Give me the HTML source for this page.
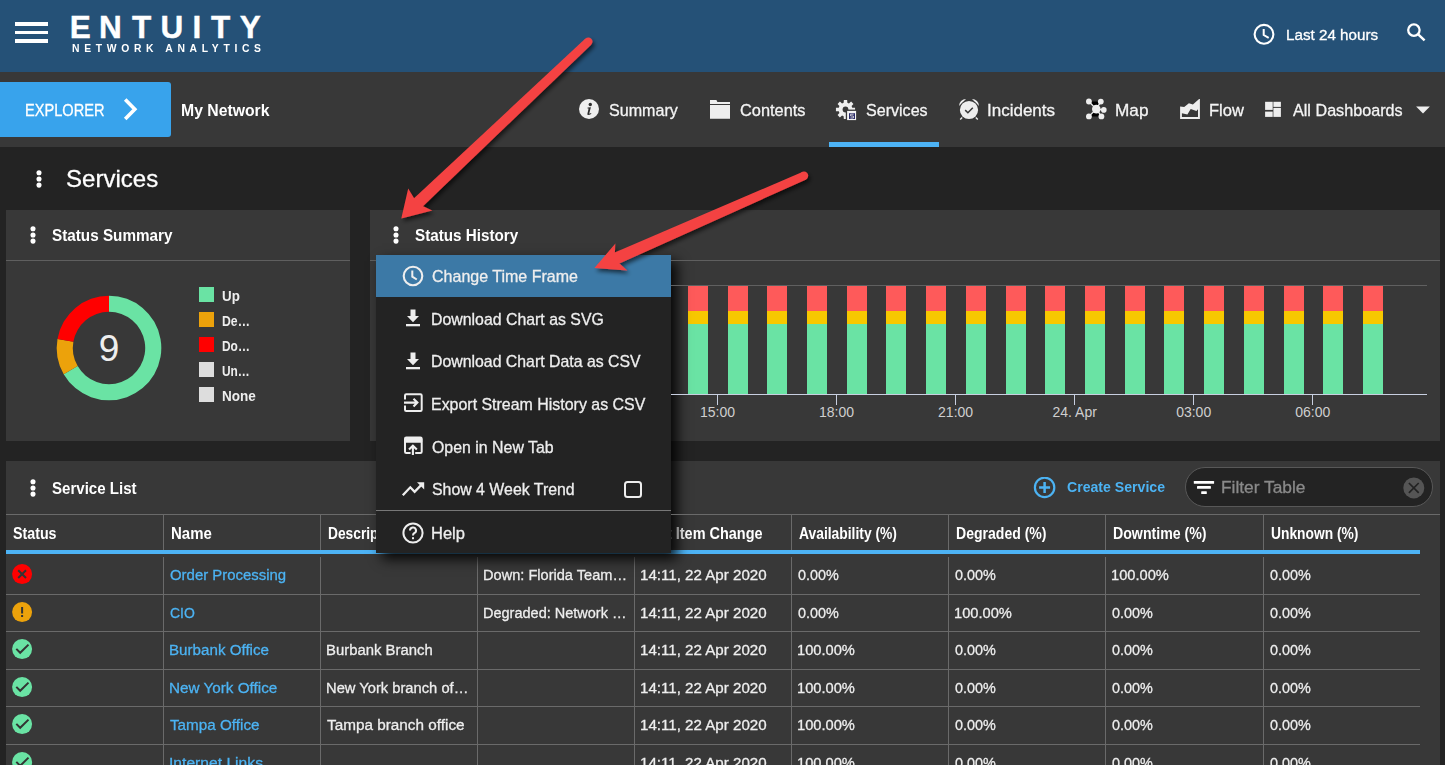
<!DOCTYPE html>
<html><head><meta charset="utf-8"><title>Entuity Services</title>
<style>html,body{margin:0;padding:0;}body{width:1445px;height:765px;overflow:hidden;position:relative;background:#232323;font-family:'Liberation Sans', sans-serif;}</style>
</head><body>
<div style="position:absolute;left:0px;top:0px;width:1445px;height:72px;background:#255177;"></div>
<div style="position:absolute;left:15px;top:22px;width:33px;height:3.8px;background:#fff;"></div>
<div style="position:absolute;left:15px;top:30.9px;width:33px;height:3.3px;background:#fff;"></div>
<div style="position:absolute;left:15px;top:39.3px;width:33px;height:3.8px;background:#fff;"></div>
<div style="position:absolute;left:60.25px;top:12px;width:40px;text-align:center;font:700 31.5px/31.5px 'Liberation Sans', sans-serif;color:#fff;-webkit-text-stroke:0.4px #fff">E</div>
<div style="position:absolute;left:90.25px;top:12px;width:40px;text-align:center;font:700 31.5px/31.5px 'Liberation Sans', sans-serif;color:#fff;-webkit-text-stroke:0.4px #fff">N</div>
<div style="position:absolute;left:121.6px;top:12px;width:40px;text-align:center;font:700 31.5px/31.5px 'Liberation Sans', sans-serif;color:#fff;-webkit-text-stroke:0.4px #fff">T</div>
<div style="position:absolute;left:151.95px;top:12px;width:40px;text-align:center;font:700 31.5px/31.5px 'Liberation Sans', sans-serif;color:#fff;-webkit-text-stroke:0.4px #fff">U</div>
<div style="position:absolute;left:176.95px;top:12px;width:40px;text-align:center;font:700 31.5px/31.5px 'Liberation Sans', sans-serif;color:#fff;-webkit-text-stroke:0.4px #fff">I</div>
<div style="position:absolute;left:200.7px;top:12px;width:40px;text-align:center;font:700 31.5px/31.5px 'Liberation Sans', sans-serif;color:#fff;-webkit-text-stroke:0.4px #fff">T</div>
<div style="position:absolute;left:230.3px;top:12px;width:40px;text-align:center;font:700 31.5px/31.5px 'Liberation Sans', sans-serif;color:#fff;-webkit-text-stroke:0.4px #fff">Y</div>
<div style="position:absolute;left:72.15px;top:44px;white-space:nowrap;font:700 10.2px/10.2px 'Liberation Sans', sans-serif;color:#fff;letter-spacing:4.6px;transform:scaleX(1.0158);transform-origin:0 0;">NETWORK ANALYTICS</div>
<svg style="position:absolute;left:1252px;top:22px;" width="24" height="24" viewBox="0 0 24 24"><circle cx="12" cy="12.3" r="9.4" fill="none" stroke="#fff" stroke-width="2.1"/><path d="M11.7 7.1V13L16.7 15.9" fill="none" stroke="#fff" stroke-width="2"/></svg>
<div style="position:absolute;left:1285.75px;top:27px;white-space:nowrap;font:400 15.2px/15.2px 'Liberation Sans', sans-serif;color:#fff;-webkit-text-stroke:0.3px #fff;transform:scaleX(1.0012);transform-origin:0 0;">Last 24 hours</div>
<svg style="position:absolute;left:1404px;top:20px;" width="24" height="24" viewBox="0 0 24 24"><circle cx="9.9" cy="10.1" r="5.7" fill="none" stroke="#fff" stroke-width="2.3"/><path d="M13.9 14.1L20.6 20.4" stroke="#fff" stroke-width="2.5" stroke-linecap="butt"/></svg>
<div style="position:absolute;left:0px;top:72px;width:1445px;height:75px;background:#383838;"></div>
<div style="position:absolute;left:0px;top:82px;width:171px;height:55px;background:#38a3ec;border-radius:0 3px 3px 0;"></div>
<div style="position:absolute;left:25.42px;top:103px;white-space:nowrap;font:400 16.8px/16.8px 'Liberation Sans', sans-serif;color:#fff;-webkit-text-stroke:0.3px #fff;transform:scaleX(0.8689);transform-origin:0 0;">EXPLORER</div>
<svg style="position:absolute;left:118px;top:94px;" width="24" height="30" viewBox="0 0 24 30"><path d="M125.2 99.4L134.8 109.2L125.2 119" transform="translate(-118,-94)" fill="none" stroke="#fff" stroke-width="3.6"/></svg>
<div style="position:absolute;left:180.89px;top:103px;white-space:nowrap;font:700 16.8px/16.8px 'Liberation Sans', sans-serif;color:#fff;transform:scaleX(0.9390);transform-origin:0 0;">My Network</div>
<svg style="position:absolute;left:578px;top:98px;" width="22" height="22" viewBox="0 0 22 22"><circle cx="11" cy="11" r="10" fill="#eeeeee"/><circle cx="12.3" cy="6.5" r="1.7" fill="#2d2d2d"/><path d="M9.6 9.6L12.9 9.2L11.3 15.3Q11.2 15.9 11.9 15.6L13.3 15L13.1 15.9Q11.6 17 10.1 17Q9.1 16.9 9.4 15.7L10.6 10.6L9.5 10.4Z" fill="#2d2d2d"/></svg>
<div style="position:absolute;left:609.2px;top:103px;white-space:nowrap;font:400 16.8px/16.8px 'Liberation Sans', sans-serif;color:#f4f4f4;-webkit-text-stroke:0.3px #f4f4f4;transform:scaleX(0.9589);transform-origin:0 0;">Summary</div>
<svg style="position:absolute;left:708px;top:98px;" width="24" height="24" viewBox="0 0 24 24"><path d="M2 2H8.4L9.4 4H22V20.8H2Z" fill="#eeeeee"/><rect x="2" y="6" width="20" height="1" fill="#383838"/></svg>
<div style="position:absolute;left:739.84px;top:103px;white-space:nowrap;font:400 16.8px/16.8px 'Liberation Sans', sans-serif;color:#f4f4f4;-webkit-text-stroke:0.3px #f4f4f4;transform:scaleX(0.9748);transform-origin:0 0;">Contents</div>
<svg style="position:absolute;left:835px;top:99px;" width="24" height="24" viewBox="0 0 24 24"><polygon points="8.63,3.75 8.86,0.94 12.14,0.94 12.37,3.75 13.95,4.41 16.10,2.58 18.42,4.90 16.59,7.05 17.25,8.63 20.06,8.86 20.06,12.14 17.25,12.37 16.59,13.95 18.42,16.10 16.10,18.42 13.95,16.59 12.37,17.25 12.14,20.06 8.86,20.06 8.63,17.25 7.05,16.59 4.90,18.42 2.58,16.10 4.41,13.95 3.75,12.37 0.94,12.14 0.94,8.86 3.75,8.63 4.41,7.05 2.58,4.90 4.90,2.58 7.05,4.41" fill="#eeeeee"/><circle cx="10.5" cy="10.5" r="2.9" fill="#383838"/><rect x="10.8" y="10.6" width="12" height="12" fill="#383838"/><rect x="12.1" y="11.9" width="9" height="9.2" fill="#f4f4f4"/><rect x="14" y="14.2" width="6" height="5.8" fill="#2a2a6a"/><path d="M18.6 15.2H15.6V17H18.4V19H15.4" fill="none" stroke="#ddd" stroke-width="0.9"/></svg>
<div style="position:absolute;left:865.9px;top:103px;white-space:nowrap;font:400 16.8px/16.8px 'Liberation Sans', sans-serif;color:#f4f4f4;-webkit-text-stroke:0.3px #f4f4f4;transform:scaleX(0.9573);transform-origin:0 0;">Services</div>
<div style="position:absolute;left:829px;top:142px;width:110px;height:5px;background:#4db3f5;"></div>
<svg style="position:absolute;left:957px;top:97px;" width="24" height="24" viewBox="0 0 24 24"><path d="M2 9A7 7 0 0 1 9 2Z" fill="#eee"/><path d="M22 9A7 7 0 0 0 15 2Z" fill="#eee"/><circle cx="12" cy="13" r="9.9" fill="#383838"/><circle cx="12" cy="13" r="9.1" fill="#eee"/><path d="M8.2 13.1L10.9 15.7L15.8 10.8" fill="none" stroke="#383838" stroke-width="1.5"/><path d="M3.2 22.6L5.2 20.6M20.8 22.6L18.8 20.6" stroke="#eee" stroke-width="1.4"/></svg>
<div style="position:absolute;left:987.48px;top:103px;white-space:nowrap;font:400 16.8px/16.8px 'Liberation Sans', sans-serif;color:#f4f4f4;-webkit-text-stroke:0.3px #f4f4f4;transform:scaleX(1.0132);transform-origin:0 0;">Incidents</div>
<svg style="position:absolute;left:1085px;top:98px;" width="22" height="22" viewBox="0 0 22 22"><g stroke="#eee" stroke-width="1.3"><path d="M3.9 3.5L11.3 11.1L15.8 3.6M3.9 18.4L11.3 11.1L16.4 18.4M11.3 11.1L18.8 11.9"/></g><circle cx="11.3" cy="11.1" r="4.3" fill="#eee"/><circle cx="3.9" cy="3.5" r="2.9" fill="#eee"/><circle cx="15.8" cy="3.6" r="2.9" fill="#eee"/><circle cx="3.9" cy="18.4" r="2.9" fill="#eee"/><circle cx="16.4" cy="18.4" r="2.9" fill="#eee"/><circle cx="18.8" cy="11.9" r="2.8" fill="#eee"/></svg>
<div style="position:absolute;left:1115.3px;top:103px;white-space:nowrap;font:400 16.8px/16.8px 'Liberation Sans', sans-serif;color:#f4f4f4;-webkit-text-stroke:0.3px #f4f4f4;transform:scaleX(1.0255);transform-origin:0 0;">Map</div>
<svg style="position:absolute;left:1179px;top:98px;" width="22" height="22" viewBox="0 0 22 22"><path d="M1.1 8.5L5.2 8.9L9.9 5.2L13.9 6.6L20.1 0.9H20.9V20.9H1.1Z" fill="#eee"/><path d="M2.9 15.2L8.4 16.6L11.7 11.1L17.4 13.1L19 11.3V19.1H2.9Z" fill="#383838"/></svg>
<div style="position:absolute;left:1208.66px;top:103px;white-space:nowrap;font:400 16.8px/16.8px 'Liberation Sans', sans-serif;color:#f4f4f4;-webkit-text-stroke:0.3px #f4f4f4;transform:scaleX(0.9830);transform-origin:0 0;">Flow</div>
<svg style="position:absolute;left:1264px;top:100px;" width="18" height="18" viewBox="0 0 18 18"><rect x="1.1" y="1.8" width="7.6" height="8.1" fill="#eee"/><rect x="9.4" y="1.8" width="7.5" height="5.1" fill="#eee"/><rect x="1.1" y="11.6" width="7.6" height="5.3" fill="#eee"/><rect x="9.4" y="7.9" width="7.5" height="9" fill="#eee"/></svg>
<div style="position:absolute;left:1292.75px;top:103px;white-space:nowrap;font:400 16.8px/16.8px 'Liberation Sans', sans-serif;color:#f4f4f4;-webkit-text-stroke:0.3px #f4f4f4;transform:scaleX(0.9632);transform-origin:0 0;">All Dashboards</div>
<svg style="position:absolute;left:1414px;top:104px;" width="18" height="12" viewBox="0 0 18 12"><path d="M2.1 2.6H15.9L9 9.4Z" fill="#eee"/></svg>
<svg style="position:absolute;left:36.3px;top:169.5px" width="6" height="18" viewBox="0 0 6 18"><circle cx="3" cy="2.8" r="2.55" fill="#fff"/><circle cx="3" cy="8.95" r="2.55" fill="#fff"/><circle cx="3" cy="15.1" r="2.55" fill="#fff"/></svg>
<div style="position:absolute;left:65.67px;top:167px;white-space:nowrap;font:400 23.8px/23.8px 'Liberation Sans', sans-serif;color:#fff;-webkit-text-stroke:0.3px #fff;transform:scaleX(1.0101);transform-origin:0 0;">Services</div>
<div style="position:absolute;left:6px;top:210px;width:344px;height:231px;background:#383838;"></div>
<div style="position:absolute;left:6px;top:259.5px;width:344px;height:1.5px;background:#5f5f5f;"></div>
<svg style="position:absolute;left:29.5px;top:225.5px" width="6" height="18" viewBox="0 0 6 18"><circle cx="3" cy="2.8" r="2.55" fill="#fff"/><circle cx="3" cy="8.95" r="2.55" fill="#fff"/><circle cx="3" cy="15.1" r="2.55" fill="#fff"/></svg>
<div style="position:absolute;left:52.09px;top:227px;white-space:nowrap;font:700 16.5px/16.5px 'Liberation Sans', sans-serif;color:#fff;transform:scaleX(0.9250);transform-origin:0 0;">Status Summary</div>
<svg style="position:absolute;left:49px;top:288px;" width="120" height="120" viewBox="0 0 120 120"><path d="M60.00 7.70A52.3 52.3 0 1 1 14.71 86.15L28.65 78.10A36.2 36.2 0 1 0 60.00 23.80Z" fill="#6ae3a4"/><path d="M14.71 86.15A52.3 52.3 0 0 1 8.49 50.92L24.35 53.71A36.2 36.2 0 0 0 28.65 78.10Z" fill="#eca20b"/><path d="M8.49 50.92A52.3 52.3 0 0 1 60.00 7.70L60.00 23.80A36.2 36.2 0 0 0 24.35 53.71Z" fill="#ff0000"/></svg>
<div style="position:absolute;left:69px;top:330px;width:80px;text-align:center;font:400 37px/37px 'Liberation Sans', sans-serif;color:#eeeeee">9</div>
<div style="position:absolute;left:199px;top:287px;width:15px;height:15px;background:#6ae3a4;"></div>
<div style="position:absolute;left:221.68px;top:289px;white-space:nowrap;font:700 14px/14px 'Liberation Sans', sans-serif;color:#eeeeee;transform:scaleX(0.9527);transform-origin:0 0;">Up</div>
<div style="position:absolute;left:199px;top:312px;width:15px;height:15px;background:#eca20b;"></div>
<div style="position:absolute;left:221.69px;top:314px;white-space:nowrap;font:700 14px/14px 'Liberation Sans', sans-serif;color:#eeeeee;transform:scaleX(0.8735);transform-origin:0 0;">De…</div>
<div style="position:absolute;left:199px;top:337px;width:15px;height:15px;background:#ff0000;"></div>
<div style="position:absolute;left:221.71px;top:339px;white-space:nowrap;font:700 14px/14px 'Liberation Sans', sans-serif;color:#eeeeee;transform:scaleX(0.8514);transform-origin:0 0;">Do…</div>
<div style="position:absolute;left:199px;top:362px;width:15px;height:15px;background:#dddddd;"></div>
<div style="position:absolute;left:221.76px;top:364px;white-space:nowrap;font:700 14px/14px 'Liberation Sans', sans-serif;color:#eeeeee;transform:scaleX(0.8498);transform-origin:0 0;">Un…</div>
<div style="position:absolute;left:199px;top:387px;width:15px;height:15px;background:#dddddd;"></div>
<div style="position:absolute;left:221.62px;top:389px;white-space:nowrap;font:700 14px/14px 'Liberation Sans', sans-serif;color:#eeeeee;transform:scaleX(0.9661);transform-origin:0 0;">None</div>
<div style="position:absolute;left:370px;top:210px;width:1070px;height:231px;background:#383838;"></div>
<div style="position:absolute;left:370px;top:259.5px;width:1070px;height:1.5px;background:#5f5f5f;"></div>
<svg style="position:absolute;left:393.3px;top:225.5px" width="6" height="18" viewBox="0 0 6 18"><circle cx="3" cy="2.8" r="2.55" fill="#fff"/><circle cx="3" cy="8.95" r="2.55" fill="#fff"/><circle cx="3" cy="15.1" r="2.55" fill="#fff"/></svg>
<div style="position:absolute;left:415.39px;top:227px;white-space:nowrap;font:700 16.5px/16.5px 'Liberation Sans', sans-serif;color:#fff;transform:scaleX(0.9227);transform-origin:0 0;">Status History</div>
<div style="position:absolute;left:390px;top:285px;width:1037px;height:1px;background:#606060;"></div>
<svg style="position:absolute;left:370px;top:286px;" width="1070" height="110" viewBox="0 0 1070 110"><rect x="40" y="0" width="20" height="25" fill="#fe5a5a"/><rect x="40" y="25" width="20" height="13" fill="#f7c800"/><rect x="40" y="38" width="20" height="70" fill="#6ae3a4"/><rect x="80" y="0" width="20" height="25" fill="#fe5a5a"/><rect x="80" y="25" width="20" height="13" fill="#f7c800"/><rect x="80" y="38" width="20" height="70" fill="#6ae3a4"/><rect x="120" y="0" width="20" height="25" fill="#fe5a5a"/><rect x="120" y="25" width="20" height="13" fill="#f7c800"/><rect x="120" y="38" width="20" height="70" fill="#6ae3a4"/><rect x="159" y="0" width="20" height="25" fill="#fe5a5a"/><rect x="159" y="25" width="20" height="13" fill="#f7c800"/><rect x="159" y="38" width="20" height="70" fill="#6ae3a4"/><rect x="199" y="0" width="20" height="25" fill="#fe5a5a"/><rect x="199" y="25" width="20" height="13" fill="#f7c800"/><rect x="199" y="38" width="20" height="70" fill="#6ae3a4"/><rect x="239" y="0" width="20" height="25" fill="#fe5a5a"/><rect x="239" y="25" width="20" height="13" fill="#f7c800"/><rect x="239" y="38" width="20" height="70" fill="#6ae3a4"/><rect x="278" y="0" width="20" height="25" fill="#fe5a5a"/><rect x="278" y="25" width="20" height="13" fill="#f7c800"/><rect x="278" y="38" width="20" height="70" fill="#6ae3a4"/><rect x="318" y="0" width="20" height="25" fill="#fe5a5a"/><rect x="318" y="25" width="20" height="13" fill="#f7c800"/><rect x="318" y="38" width="20" height="70" fill="#6ae3a4"/><rect x="358" y="0" width="20" height="25" fill="#fe5a5a"/><rect x="358" y="25" width="20" height="13" fill="#f7c800"/><rect x="358" y="38" width="20" height="70" fill="#6ae3a4"/><rect x="397" y="0" width="20" height="25" fill="#fe5a5a"/><rect x="397" y="25" width="20" height="13" fill="#f7c800"/><rect x="397" y="38" width="20" height="70" fill="#6ae3a4"/><rect x="437" y="0" width="20" height="25" fill="#fe5a5a"/><rect x="437" y="25" width="20" height="13" fill="#f7c800"/><rect x="437" y="38" width="20" height="70" fill="#6ae3a4"/><rect x="477" y="0" width="20" height="25" fill="#fe5a5a"/><rect x="477" y="25" width="20" height="13" fill="#f7c800"/><rect x="477" y="38" width="20" height="70" fill="#6ae3a4"/><rect x="516" y="0" width="20" height="25" fill="#fe5a5a"/><rect x="516" y="25" width="20" height="13" fill="#f7c800"/><rect x="516" y="38" width="20" height="70" fill="#6ae3a4"/><rect x="556" y="0" width="20" height="25" fill="#fe5a5a"/><rect x="556" y="25" width="20" height="13" fill="#f7c800"/><rect x="556" y="38" width="20" height="70" fill="#6ae3a4"/><rect x="596" y="0" width="20" height="25" fill="#fe5a5a"/><rect x="596" y="25" width="20" height="13" fill="#f7c800"/><rect x="596" y="38" width="20" height="70" fill="#6ae3a4"/><rect x="636" y="0" width="20" height="25" fill="#fe5a5a"/><rect x="636" y="25" width="20" height="13" fill="#f7c800"/><rect x="636" y="38" width="20" height="70" fill="#6ae3a4"/><rect x="675" y="0" width="20" height="25" fill="#fe5a5a"/><rect x="675" y="25" width="20" height="13" fill="#f7c800"/><rect x="675" y="38" width="20" height="70" fill="#6ae3a4"/><rect x="715" y="0" width="20" height="25" fill="#fe5a5a"/><rect x="715" y="25" width="20" height="13" fill="#f7c800"/><rect x="715" y="38" width="20" height="70" fill="#6ae3a4"/><rect x="755" y="0" width="20" height="25" fill="#fe5a5a"/><rect x="755" y="25" width="20" height="13" fill="#f7c800"/><rect x="755" y="38" width="20" height="70" fill="#6ae3a4"/><rect x="794" y="0" width="20" height="25" fill="#fe5a5a"/><rect x="794" y="25" width="20" height="13" fill="#f7c800"/><rect x="794" y="38" width="20" height="70" fill="#6ae3a4"/><rect x="834" y="0" width="20" height="25" fill="#fe5a5a"/><rect x="834" y="25" width="20" height="13" fill="#f7c800"/><rect x="834" y="38" width="20" height="70" fill="#6ae3a4"/><rect x="874" y="0" width="20" height="25" fill="#fe5a5a"/><rect x="874" y="25" width="20" height="13" fill="#f7c800"/><rect x="874" y="38" width="20" height="70" fill="#6ae3a4"/><rect x="914" y="0" width="20" height="25" fill="#fe5a5a"/><rect x="914" y="25" width="20" height="13" fill="#f7c800"/><rect x="914" y="38" width="20" height="70" fill="#6ae3a4"/><rect x="953" y="0" width="20" height="25" fill="#fe5a5a"/><rect x="953" y="25" width="20" height="13" fill="#f7c800"/><rect x="953" y="38" width="20" height="70" fill="#6ae3a4"/><rect x="993" y="0" width="20" height="25" fill="#fe5a5a"/><rect x="993" y="25" width="20" height="13" fill="#f7c800"/><rect x="993" y="38" width="20" height="70" fill="#6ae3a4"/></svg>
<div style="position:absolute;left:390px;top:394px;width:1037px;height:1.2px;background:#c8cfe0;"></div>
<div style="position:absolute;left:716.9px;top:394px;width:1.3px;height:10.5px;background:#c8cfe0;"></div>
<div style="position:absolute;left:677.5px;top:405.10px;width:80px;text-align:center;font:400 14px/14px 'Liberation Sans', sans-serif;color:#cfcfcf">15:00</div>
<div style="position:absolute;left:835.9499999999999px;top:394px;width:1.3px;height:10.5px;background:#c8cfe0;"></div>
<div style="position:absolute;left:796.5px;top:405.10px;width:80px;text-align:center;font:400 14px/14px 'Liberation Sans', sans-serif;color:#cfcfcf">18:00</div>
<div style="position:absolute;left:955.0px;top:394px;width:1.3px;height:10.5px;background:#c8cfe0;"></div>
<div style="position:absolute;left:915.6px;top:405.10px;width:80px;text-align:center;font:400 14px/14px 'Liberation Sans', sans-serif;color:#cfcfcf">21:00</div>
<div style="position:absolute;left:1074.0500000000002px;top:394px;width:1.3px;height:10.5px;background:#c8cfe0;"></div>
<div style="position:absolute;left:1034.7px;top:405.10px;width:80px;text-align:center;font:400 14px/14px 'Liberation Sans', sans-serif;color:#cfcfcf">24. Apr</div>
<div style="position:absolute;left:1193.1000000000001px;top:394px;width:1.3px;height:10.5px;background:#c8cfe0;"></div>
<div style="position:absolute;left:1153.7px;top:405.10px;width:80px;text-align:center;font:400 14px/14px 'Liberation Sans', sans-serif;color:#cfcfcf">03:00</div>
<div style="position:absolute;left:1312.15px;top:394px;width:1.3px;height:10.5px;background:#c8cfe0;"></div>
<div style="position:absolute;left:1272.8px;top:405.10px;width:80px;text-align:center;font:400 14px/14px 'Liberation Sans', sans-serif;color:#cfcfcf">06:00</div>
<div style="position:absolute;left:478.79999999999995px;top:394px;width:1.3px;height:10.5px;background:#c8cfe0;"></div>
<div style="position:absolute;left:439.4px;top:405.10px;width:80px;text-align:center;font:400 14px/14px 'Liberation Sans', sans-serif;color:#cfcfcf">09:00</div>
<div style="position:absolute;left:597.85px;top:394px;width:1.3px;height:10.5px;background:#c8cfe0;"></div>
<div style="position:absolute;left:558.5px;top:405.10px;width:80px;text-align:center;font:400 14px/14px 'Liberation Sans', sans-serif;color:#cfcfcf">12:00</div>
<div style="position:absolute;left:6px;top:461px;width:1434px;height:304px;background:#383838;"></div>
<svg style="position:absolute;left:29.5px;top:478.5px" width="6" height="18" viewBox="0 0 6 18"><circle cx="3" cy="2.8" r="2.55" fill="#fff"/><circle cx="3" cy="8.95" r="2.55" fill="#fff"/><circle cx="3" cy="15.1" r="2.55" fill="#fff"/></svg>
<div style="position:absolute;left:52.08px;top:481px;white-space:nowrap;font:700 16px/16px 'Liberation Sans', sans-serif;color:#fff;transform:scaleX(0.9414);transform-origin:0 0;">Service List</div>
<svg style="position:absolute;left:1033px;top:477px;" width="23" height="23" viewBox="0 0 23 23"><circle cx="11.6" cy="10.4" r="9.7" fill="none" stroke="#4cb3f3" stroke-width="2.2"/><path d="M11.6 4.9V15.9M6.1 10.4H17.1" stroke="#4cb3f3" stroke-width="2.5"/></svg>
<div style="position:absolute;left:1067.03px;top:479px;white-space:nowrap;font:700 15.5px/15.5px 'Liberation Sans', sans-serif;color:#4cb3f3;transform:scaleX(0.9098);transform-origin:0 0;">Create Service</div>
<div style="position:absolute;left:1185px;top:467px;width:246px;height:38px;border:1px solid #585858;border-radius:20px;background:#232323"></div>
<svg style="position:absolute;left:1192px;top:479px;" width="24" height="16" viewBox="0 0 24 16"><rect x="1.8" y="1.9" width="20.3" height="2.9" rx="0.6" fill="#fff"/><rect x="5" y="6.9" width="13.9" height="2.9" rx="0.6" fill="#fff"/><rect x="9.2" y="12.2" width="5.6" height="2.9" rx="0.6" fill="#fff"/></svg>
<div style="position:absolute;left:1220.59px;top:480px;white-space:nowrap;font:400 16.8px/16.8px 'Liberation Sans', sans-serif;color:#8a8a8a;-webkit-text-stroke:0.3px #8a8a8a;transform:scaleX(1.0336);transform-origin:0 0;">Filter Table</div>
<svg style="position:absolute;left:1403px;top:476.5px;" width="22" height="22" viewBox="0 0 22 22"><circle cx="10.8" cy="10.9" r="10.5" fill="#555"/><path d="M5.9 6L15.7 15.8M15.7 6L5.9 15.8" stroke="#232323" stroke-width="1.7"/></svg>
<div style="position:absolute;left:6px;top:514px;width:1434px;height:1px;background:#6a6a6a;"></div>
<div style="position:absolute;left:13.13px;top:526px;white-space:nowrap;font:700 15.9px/15.9px 'Liberation Sans', sans-serif;color:#fff;transform:scaleX(0.8963);transform-origin:0 0;">Status</div>
<div style="position:absolute;left:170.64px;top:526px;white-space:nowrap;font:700 15.9px/15.9px 'Liberation Sans', sans-serif;color:#fff;transform:scaleX(0.9423);transform-origin:0 0;">Name</div>
<div style="position:absolute;left:327.72px;top:526px;white-space:nowrap;font:700 15.9px/15.9px 'Liberation Sans', sans-serif;color:#fff;transform:scaleX(0.8657);transform-origin:0 0;">Description</div>
<div style="position:absolute;left:485.13px;top:526px;white-space:nowrap;font:700 15.9px/15.9px 'Liberation Sans', sans-serif;color:#fff;transform:scaleX(0.8993);transform-origin:0 0;">Status Reason</div>
<div style="position:absolute;left:641.67px;top:526px;white-space:nowrap;font:700 15.9px/15.9px 'Liberation Sans', sans-serif;color:#fff;transform:scaleX(0.9104);transform-origin:0 0;">Last Item Change</div>
<div style="position:absolute;left:799.26px;top:526px;white-space:nowrap;font:700 15.9px/15.9px 'Liberation Sans', sans-serif;color:#fff;transform:scaleX(0.8714);transform-origin:0 0;">Availability (%)</div>
<div style="position:absolute;left:955.7px;top:526px;white-space:nowrap;font:700 15.9px/15.9px 'Liberation Sans', sans-serif;color:#fff;transform:scaleX(0.8839);transform-origin:0 0;">Degraded (%)</div>
<div style="position:absolute;left:1112.69px;top:526px;white-space:nowrap;font:700 15.9px/15.9px 'Liberation Sans', sans-serif;color:#fff;transform:scaleX(0.8908);transform-origin:0 0;">Downtime (%)</div>
<div style="position:absolute;left:1270.98px;top:526px;white-space:nowrap;font:700 15.9px/15.9px 'Liberation Sans', sans-serif;color:#fff;transform:scaleX(0.8688);transform-origin:0 0;">Unknown (%)</div>
<div style="position:absolute;left:163px;top:515px;width:1px;height:35px;background:#6a6a6a;"></div>
<div style="position:absolute;left:320px;top:515px;width:1px;height:35px;background:#6a6a6a;"></div>
<div style="position:absolute;left:477px;top:515px;width:1px;height:35px;background:#6a6a6a;"></div>
<div style="position:absolute;left:634px;top:515px;width:1px;height:35px;background:#6a6a6a;"></div>
<div style="position:absolute;left:791px;top:515px;width:1px;height:35px;background:#6a6a6a;"></div>
<div style="position:absolute;left:948px;top:515px;width:1px;height:35px;background:#6a6a6a;"></div>
<div style="position:absolute;left:1105px;top:515px;width:1px;height:35px;background:#6a6a6a;"></div>
<div style="position:absolute;left:1263px;top:515px;width:1px;height:35px;background:#6a6a6a;"></div>
<div style="position:absolute;left:6px;top:550px;width:1414px;height:4px;background:#4db3f5;"></div>
<div style="position:absolute;left:6px;top:594px;width:1414px;height:1px;background:#6a6a6a;"></div>
<div style="position:absolute;left:163px;top:557px;width:1px;height:37px;background:#6a6a6a;"></div>
<div style="position:absolute;left:320px;top:557px;width:1px;height:37px;background:#6a6a6a;"></div>
<div style="position:absolute;left:477px;top:557px;width:1px;height:37px;background:#6a6a6a;"></div>
<div style="position:absolute;left:634px;top:557px;width:1px;height:37px;background:#6a6a6a;"></div>
<div style="position:absolute;left:791px;top:557px;width:1px;height:37px;background:#6a6a6a;"></div>
<div style="position:absolute;left:948px;top:557px;width:1px;height:37px;background:#6a6a6a;"></div>
<div style="position:absolute;left:1105px;top:557px;width:1px;height:37px;background:#6a6a6a;"></div>
<div style="position:absolute;left:1263px;top:557px;width:1px;height:37px;background:#6a6a6a;"></div>
<svg style="position:absolute;left:12px;top:564.0px;" width="21" height="21" viewBox="0 0 21 21"><circle cx="10.1" cy="10.1" r="10" fill="#ff0000"/><path d="M6.2 6.2L14 14M14 6.2L6.2 14" stroke="#333" stroke-width="2"/></svg>
<div style="position:absolute;left:169.61px;top:567px;white-space:nowrap;font:400 15.5px/15.5px 'Liberation Sans', sans-serif;color:#4cb3f3;-webkit-text-stroke:0.3px #4cb3f3;transform:scaleX(0.9631);transform-origin:0 0;">Order Processing</div>
<div style="position:absolute;left:483.1px;top:567px;white-space:nowrap;font:400 15.5px/15.5px 'Liberation Sans', sans-serif;color:#eeeeee;-webkit-text-stroke:0.3px #eeeeee;transform:scaleX(0.9407);transform-origin:0 0;">Down: Florida Team…</div>
<div style="position:absolute;left:640.11px;top:567px;white-space:nowrap;font:400 15.5px/15.5px 'Liberation Sans', sans-serif;color:#eeeeee;-webkit-text-stroke:0.3px #eeeeee;transform:scaleX(0.9751);transform-origin:0 0;">14:11, 22 Apr 2020</div>
<div style="position:absolute;left:797.74px;top:567px;white-space:nowrap;font:400 15.5px/15.5px 'Liberation Sans', sans-serif;color:#eeeeee;-webkit-text-stroke:0.3px #eeeeee;transform:scaleX(0.9279);transform-origin:0 0;">0.00%</div>
<div style="position:absolute;left:954.74px;top:567px;white-space:nowrap;font:400 15.5px/15.5px 'Liberation Sans', sans-serif;color:#eeeeee;-webkit-text-stroke:0.3px #eeeeee;transform:scaleX(0.9279);transform-origin:0 0;">0.00%</div>
<div style="position:absolute;left:1111.15px;top:567px;white-space:nowrap;font:400 15.5px/15.5px 'Liberation Sans', sans-serif;color:#eeeeee;-webkit-text-stroke:0.3px #eeeeee;transform:scaleX(0.9456);transform-origin:0 0;">100.00%</div>
<div style="position:absolute;left:1269.74px;top:567px;white-space:nowrap;font:400 15.5px/15.5px 'Liberation Sans', sans-serif;color:#eeeeee;-webkit-text-stroke:0.3px #eeeeee;transform:scaleX(0.9279);transform-origin:0 0;">0.00%</div>
<div style="position:absolute;left:6px;top:631px;width:1414px;height:1px;background:#6a6a6a;"></div>
<div style="position:absolute;left:163px;top:595px;width:1px;height:36px;background:#6a6a6a;"></div>
<div style="position:absolute;left:320px;top:595px;width:1px;height:36px;background:#6a6a6a;"></div>
<div style="position:absolute;left:477px;top:595px;width:1px;height:36px;background:#6a6a6a;"></div>
<div style="position:absolute;left:634px;top:595px;width:1px;height:36px;background:#6a6a6a;"></div>
<div style="position:absolute;left:791px;top:595px;width:1px;height:36px;background:#6a6a6a;"></div>
<div style="position:absolute;left:948px;top:595px;width:1px;height:36px;background:#6a6a6a;"></div>
<div style="position:absolute;left:1105px;top:595px;width:1px;height:36px;background:#6a6a6a;"></div>
<div style="position:absolute;left:1263px;top:595px;width:1px;height:36px;background:#6a6a6a;"></div>
<svg style="position:absolute;left:12px;top:601.5px;" width="21" height="21" viewBox="0 0 21 21"><circle cx="10.1" cy="10.1" r="10" fill="#eca20b"/><rect x="9.1" y="5" width="2" height="6.5" fill="#333"/><rect x="9.1" y="13" width="2" height="2" fill="#333"/></svg>
<div style="position:absolute;left:169.64px;top:605px;white-space:nowrap;font:400 15.5px/15.5px 'Liberation Sans', sans-serif;color:#4cb3f3;-webkit-text-stroke:0.3px #4cb3f3;transform:scaleX(0.9007);transform-origin:0 0;">CIO</div>
<div style="position:absolute;left:483.11px;top:605px;white-space:nowrap;font:400 15.5px/15.5px 'Liberation Sans', sans-serif;color:#eeeeee;-webkit-text-stroke:0.3px #eeeeee;transform:scaleX(0.9357);transform-origin:0 0;">Degraded: Network …</div>
<div style="position:absolute;left:640.11px;top:605px;white-space:nowrap;font:400 15.5px/15.5px 'Liberation Sans', sans-serif;color:#eeeeee;-webkit-text-stroke:0.3px #eeeeee;transform:scaleX(0.9751);transform-origin:0 0;">14:11, 22 Apr 2020</div>
<div style="position:absolute;left:797.74px;top:605px;white-space:nowrap;font:400 15.5px/15.5px 'Liberation Sans', sans-serif;color:#eeeeee;-webkit-text-stroke:0.3px #eeeeee;transform:scaleX(0.9279);transform-origin:0 0;">0.00%</div>
<div style="position:absolute;left:954.15px;top:605px;white-space:nowrap;font:400 15.5px/15.5px 'Liberation Sans', sans-serif;color:#eeeeee;-webkit-text-stroke:0.3px #eeeeee;transform:scaleX(0.9456);transform-origin:0 0;">100.00%</div>
<div style="position:absolute;left:1111.74px;top:605px;white-space:nowrap;font:400 15.5px/15.5px 'Liberation Sans', sans-serif;color:#eeeeee;-webkit-text-stroke:0.3px #eeeeee;transform:scaleX(0.9279);transform-origin:0 0;">0.00%</div>
<div style="position:absolute;left:1269.74px;top:605px;white-space:nowrap;font:400 15.5px/15.5px 'Liberation Sans', sans-serif;color:#eeeeee;-webkit-text-stroke:0.3px #eeeeee;transform:scaleX(0.9279);transform-origin:0 0;">0.00%</div>
<div style="position:absolute;left:6px;top:669px;width:1414px;height:1px;background:#6a6a6a;"></div>
<div style="position:absolute;left:163px;top:632px;width:1px;height:37px;background:#6a6a6a;"></div>
<div style="position:absolute;left:320px;top:632px;width:1px;height:37px;background:#6a6a6a;"></div>
<div style="position:absolute;left:477px;top:632px;width:1px;height:37px;background:#6a6a6a;"></div>
<div style="position:absolute;left:634px;top:632px;width:1px;height:37px;background:#6a6a6a;"></div>
<div style="position:absolute;left:791px;top:632px;width:1px;height:37px;background:#6a6a6a;"></div>
<div style="position:absolute;left:948px;top:632px;width:1px;height:37px;background:#6a6a6a;"></div>
<div style="position:absolute;left:1105px;top:632px;width:1px;height:37px;background:#6a6a6a;"></div>
<div style="position:absolute;left:1263px;top:632px;width:1px;height:37px;background:#6a6a6a;"></div>
<svg style="position:absolute;left:12px;top:639.0px;" width="21" height="21" viewBox="0 0 21 21"><circle cx="10.1" cy="10.1" r="10" fill="#6ae3a4"/><path d="M4.3 9.9L8.2 13.8L16.5 5.6" fill="none" stroke="#333" stroke-width="2"/></svg>
<div style="position:absolute;left:169.05px;top:642px;white-space:nowrap;font:400 15.5px/15.5px 'Liberation Sans', sans-serif;color:#4cb3f3;-webkit-text-stroke:0.3px #4cb3f3;transform:scaleX(0.9780);transform-origin:0 0;">Burbank Office</div>
<div style="position:absolute;left:326.08px;top:642px;white-space:nowrap;font:400 15.5px/15.5px 'Liberation Sans', sans-serif;color:#eeeeee;-webkit-text-stroke:0.3px #eeeeee;transform:scaleX(0.9602);transform-origin:0 0;">Burbank Branch</div>
<div style="position:absolute;left:640.11px;top:642px;white-space:nowrap;font:400 15.5px/15.5px 'Liberation Sans', sans-serif;color:#eeeeee;-webkit-text-stroke:0.3px #eeeeee;transform:scaleX(0.9751);transform-origin:0 0;">14:11, 22 Apr 2020</div>
<div style="position:absolute;left:797.15px;top:642px;white-space:nowrap;font:400 15.5px/15.5px 'Liberation Sans', sans-serif;color:#eeeeee;-webkit-text-stroke:0.3px #eeeeee;transform:scaleX(0.9456);transform-origin:0 0;">100.00%</div>
<div style="position:absolute;left:954.74px;top:642px;white-space:nowrap;font:400 15.5px/15.5px 'Liberation Sans', sans-serif;color:#eeeeee;-webkit-text-stroke:0.3px #eeeeee;transform:scaleX(0.9279);transform-origin:0 0;">0.00%</div>
<div style="position:absolute;left:1111.74px;top:642px;white-space:nowrap;font:400 15.5px/15.5px 'Liberation Sans', sans-serif;color:#eeeeee;-webkit-text-stroke:0.3px #eeeeee;transform:scaleX(0.9279);transform-origin:0 0;">0.00%</div>
<div style="position:absolute;left:1269.74px;top:642px;white-space:nowrap;font:400 15.5px/15.5px 'Liberation Sans', sans-serif;color:#eeeeee;-webkit-text-stroke:0.3px #eeeeee;transform:scaleX(0.9279);transform-origin:0 0;">0.00%</div>
<div style="position:absolute;left:6px;top:706px;width:1414px;height:1px;background:#6a6a6a;"></div>
<div style="position:absolute;left:163px;top:670px;width:1px;height:36px;background:#6a6a6a;"></div>
<div style="position:absolute;left:320px;top:670px;width:1px;height:36px;background:#6a6a6a;"></div>
<div style="position:absolute;left:477px;top:670px;width:1px;height:36px;background:#6a6a6a;"></div>
<div style="position:absolute;left:634px;top:670px;width:1px;height:36px;background:#6a6a6a;"></div>
<div style="position:absolute;left:791px;top:670px;width:1px;height:36px;background:#6a6a6a;"></div>
<div style="position:absolute;left:948px;top:670px;width:1px;height:36px;background:#6a6a6a;"></div>
<div style="position:absolute;left:1105px;top:670px;width:1px;height:36px;background:#6a6a6a;"></div>
<div style="position:absolute;left:1263px;top:670px;width:1px;height:36px;background:#6a6a6a;"></div>
<svg style="position:absolute;left:12px;top:676.5px;" width="21" height="21" viewBox="0 0 21 21"><circle cx="10.1" cy="10.1" r="10" fill="#6ae3a4"/><path d="M4.3 9.9L8.2 13.8L16.5 5.6" fill="none" stroke="#333" stroke-width="2"/></svg>
<div style="position:absolute;left:169.05px;top:680px;white-space:nowrap;font:400 15.5px/15.5px 'Liberation Sans', sans-serif;color:#4cb3f3;-webkit-text-stroke:0.3px #4cb3f3;transform:scaleX(0.9845);transform-origin:0 0;">New York Office</div>
<div style="position:absolute;left:326.09px;top:680px;white-space:nowrap;font:400 15.5px/15.5px 'Liberation Sans', sans-serif;color:#eeeeee;-webkit-text-stroke:0.3px #eeeeee;transform:scaleX(0.9497);transform-origin:0 0;">New York branch of…</div>
<div style="position:absolute;left:640.11px;top:680px;white-space:nowrap;font:400 15.5px/15.5px 'Liberation Sans', sans-serif;color:#eeeeee;-webkit-text-stroke:0.3px #eeeeee;transform:scaleX(0.9751);transform-origin:0 0;">14:11, 22 Apr 2020</div>
<div style="position:absolute;left:797.15px;top:680px;white-space:nowrap;font:400 15.5px/15.5px 'Liberation Sans', sans-serif;color:#eeeeee;-webkit-text-stroke:0.3px #eeeeee;transform:scaleX(0.9456);transform-origin:0 0;">100.00%</div>
<div style="position:absolute;left:954.74px;top:680px;white-space:nowrap;font:400 15.5px/15.5px 'Liberation Sans', sans-serif;color:#eeeeee;-webkit-text-stroke:0.3px #eeeeee;transform:scaleX(0.9279);transform-origin:0 0;">0.00%</div>
<div style="position:absolute;left:1111.74px;top:680px;white-space:nowrap;font:400 15.5px/15.5px 'Liberation Sans', sans-serif;color:#eeeeee;-webkit-text-stroke:0.3px #eeeeee;transform:scaleX(0.9279);transform-origin:0 0;">0.00%</div>
<div style="position:absolute;left:1269.74px;top:680px;white-space:nowrap;font:400 15.5px/15.5px 'Liberation Sans', sans-serif;color:#eeeeee;-webkit-text-stroke:0.3px #eeeeee;transform:scaleX(0.9279);transform-origin:0 0;">0.00%</div>
<div style="position:absolute;left:6px;top:744px;width:1414px;height:1px;background:#6a6a6a;"></div>
<div style="position:absolute;left:163px;top:707px;width:1px;height:37px;background:#6a6a6a;"></div>
<div style="position:absolute;left:320px;top:707px;width:1px;height:37px;background:#6a6a6a;"></div>
<div style="position:absolute;left:477px;top:707px;width:1px;height:37px;background:#6a6a6a;"></div>
<div style="position:absolute;left:634px;top:707px;width:1px;height:37px;background:#6a6a6a;"></div>
<div style="position:absolute;left:791px;top:707px;width:1px;height:37px;background:#6a6a6a;"></div>
<div style="position:absolute;left:948px;top:707px;width:1px;height:37px;background:#6a6a6a;"></div>
<div style="position:absolute;left:1105px;top:707px;width:1px;height:37px;background:#6a6a6a;"></div>
<div style="position:absolute;left:1263px;top:707px;width:1px;height:37px;background:#6a6a6a;"></div>
<svg style="position:absolute;left:12px;top:714.0px;" width="21" height="21" viewBox="0 0 21 21"><circle cx="10.1" cy="10.1" r="10" fill="#6ae3a4"/><path d="M4.3 9.9L8.2 13.8L16.5 5.6" fill="none" stroke="#333" stroke-width="2"/></svg>
<div style="position:absolute;left:169.97px;top:717px;white-space:nowrap;font:400 15.5px/15.5px 'Liberation Sans', sans-serif;color:#4cb3f3;-webkit-text-stroke:0.3px #4cb3f3;transform:scaleX(0.9829);transform-origin:0 0;">Tampa Office</div>
<div style="position:absolute;left:326.97px;top:717px;white-space:nowrap;font:400 15.5px/15.5px 'Liberation Sans', sans-serif;color:#eeeeee;-webkit-text-stroke:0.3px #eeeeee;transform:scaleX(0.9875);transform-origin:0 0;">Tampa branch office</div>
<div style="position:absolute;left:640.11px;top:717px;white-space:nowrap;font:400 15.5px/15.5px 'Liberation Sans', sans-serif;color:#eeeeee;-webkit-text-stroke:0.3px #eeeeee;transform:scaleX(0.9751);transform-origin:0 0;">14:11, 22 Apr 2020</div>
<div style="position:absolute;left:797.15px;top:717px;white-space:nowrap;font:400 15.5px/15.5px 'Liberation Sans', sans-serif;color:#eeeeee;-webkit-text-stroke:0.3px #eeeeee;transform:scaleX(0.9456);transform-origin:0 0;">100.00%</div>
<div style="position:absolute;left:954.74px;top:717px;white-space:nowrap;font:400 15.5px/15.5px 'Liberation Sans', sans-serif;color:#eeeeee;-webkit-text-stroke:0.3px #eeeeee;transform:scaleX(0.9279);transform-origin:0 0;">0.00%</div>
<div style="position:absolute;left:1111.74px;top:717px;white-space:nowrap;font:400 15.5px/15.5px 'Liberation Sans', sans-serif;color:#eeeeee;-webkit-text-stroke:0.3px #eeeeee;transform:scaleX(0.9279);transform-origin:0 0;">0.00%</div>
<div style="position:absolute;left:1269.74px;top:717px;white-space:nowrap;font:400 15.5px/15.5px 'Liberation Sans', sans-serif;color:#eeeeee;-webkit-text-stroke:0.3px #eeeeee;transform:scaleX(0.9279);transform-origin:0 0;">0.00%</div>
<div style="position:absolute;left:6px;top:781px;width:1414px;height:1px;background:#6a6a6a;"></div>
<div style="position:absolute;left:163px;top:745px;width:1px;height:36px;background:#6a6a6a;"></div>
<div style="position:absolute;left:320px;top:745px;width:1px;height:36px;background:#6a6a6a;"></div>
<div style="position:absolute;left:477px;top:745px;width:1px;height:36px;background:#6a6a6a;"></div>
<div style="position:absolute;left:634px;top:745px;width:1px;height:36px;background:#6a6a6a;"></div>
<div style="position:absolute;left:791px;top:745px;width:1px;height:36px;background:#6a6a6a;"></div>
<div style="position:absolute;left:948px;top:745px;width:1px;height:36px;background:#6a6a6a;"></div>
<div style="position:absolute;left:1105px;top:745px;width:1px;height:36px;background:#6a6a6a;"></div>
<div style="position:absolute;left:1263px;top:745px;width:1px;height:36px;background:#6a6a6a;"></div>
<svg style="position:absolute;left:12px;top:751.5px;" width="21" height="21" viewBox="0 0 21 21"><circle cx="10.1" cy="10.1" r="10" fill="#6ae3a4"/><path d="M4.3 9.9L8.2 13.8L16.5 5.6" fill="none" stroke="#333" stroke-width="2"/></svg>
<div style="position:absolute;left:168.87px;top:755px;white-space:nowrap;font:400 15.5px/15.5px 'Liberation Sans', sans-serif;color:#4cb3f3;-webkit-text-stroke:0.3px #4cb3f3;transform:scaleX(1.0097);transform-origin:0 0;">Internet Links</div>
<div style="position:absolute;left:640.11px;top:755px;white-space:nowrap;font:400 15.5px/15.5px 'Liberation Sans', sans-serif;color:#eeeeee;-webkit-text-stroke:0.3px #eeeeee;transform:scaleX(0.9751);transform-origin:0 0;">14:11, 22 Apr 2020</div>
<div style="position:absolute;left:797.15px;top:755px;white-space:nowrap;font:400 15.5px/15.5px 'Liberation Sans', sans-serif;color:#eeeeee;-webkit-text-stroke:0.3px #eeeeee;transform:scaleX(0.9456);transform-origin:0 0;">100.00%</div>
<div style="position:absolute;left:954.74px;top:755px;white-space:nowrap;font:400 15.5px/15.5px 'Liberation Sans', sans-serif;color:#eeeeee;-webkit-text-stroke:0.3px #eeeeee;transform:scaleX(0.9279);transform-origin:0 0;">0.00%</div>
<div style="position:absolute;left:1111.74px;top:755px;white-space:nowrap;font:400 15.5px/15.5px 'Liberation Sans', sans-serif;color:#eeeeee;-webkit-text-stroke:0.3px #eeeeee;transform:scaleX(0.9279);transform-origin:0 0;">0.00%</div>
<div style="position:absolute;left:1269.74px;top:755px;white-space:nowrap;font:400 15.5px/15.5px 'Liberation Sans', sans-serif;color:#eeeeee;-webkit-text-stroke:0.3px #eeeeee;transform:scaleX(0.9279);transform-origin:0 0;">0.00%</div>
<div style="position:absolute;left:376px;top:255px;width:295px;height:298px;background:#232323;box-shadow:6px 6px 12px rgba(0,0,0,0.9)"></div>
<div style="position:absolute;left:376px;top:255px;width:295px;height:42px;background:#3c79a6;"></div>
<svg style="position:absolute;left:401px;top:263.6px;" width="24" height="24" viewBox="0 0 24 24"><circle cx="12" cy="12" r="9.3" fill="none" stroke="#eee" stroke-width="2.1"/><path d="M11.3 6.5V12.6L15.8 15.5" fill="none" stroke="#eee" stroke-width="2"/></svg>
<div style="position:absolute;left:431.84px;top:268px;white-space:nowrap;font:400 16.2px/16.2px 'Liberation Sans', sans-serif;color:#eeeeee;-webkit-text-stroke:0.3px #eeeeee;transform:scaleX(0.9893);transform-origin:0 0;">Change Time Frame</div>
<svg style="position:absolute;left:401px;top:306.20000000000005px;" width="24" height="24" viewBox="0 0 24 24"><path d="M9.5 3.5H14.5V10H18L12 16.3L6 10H9.5Z" fill="#eee"/><rect x="5" y="18" width="14" height="2.3" fill="#eee"/></svg>
<div style="position:absolute;left:431.3px;top:311px;white-space:nowrap;font:400 16.2px/16.2px 'Liberation Sans', sans-serif;color:#eeeeee;-webkit-text-stroke:0.3px #eeeeee;transform:scaleX(0.9799);transform-origin:0 0;">Download Chart as SVG</div>
<svg style="position:absolute;left:401px;top:348.8px;" width="24" height="24" viewBox="0 0 24 24"><path d="M9.5 3.5H14.5V10H18L12 16.3L6 10H9.5Z" fill="#eee"/><rect x="5" y="18" width="14" height="2.3" fill="#eee"/></svg>
<div style="position:absolute;left:431.31px;top:353px;white-space:nowrap;font:400 16.2px/16.2px 'Liberation Sans', sans-serif;color:#eeeeee;-webkit-text-stroke:0.3px #eeeeee;transform:scaleX(0.9788);transform-origin:0 0;">Download Chart Data as CSV</div>
<svg style="position:absolute;left:401px;top:391.40000000000003px;" width="24" height="24" viewBox="0 0 24 24"><path d="M4 8.6V4.6Q4 3.3 5.3 3.3H19.4Q20.7 3.3 20.7 4.6V18.7Q20.7 20 19.4 20H5.3Q4 20 4 18.7V14.6" fill="none" stroke="#eee" stroke-width="2"/><path d="M3 11.6H16.3M12.5 7.7L16.4 11.6L12.5 15.5" fill="none" stroke="#eee" stroke-width="2.1"/></svg>
<div style="position:absolute;left:431.3px;top:396px;white-space:nowrap;font:400 16.2px/16.2px 'Liberation Sans', sans-serif;color:#eeeeee;-webkit-text-stroke:0.3px #eeeeee;transform:scaleX(0.9846);transform-origin:0 0;">Export Stream History as CSV</div>
<svg style="position:absolute;left:401px;top:434.0px;" width="24" height="24" viewBox="0 0 24 24"><path d="M9.6 19H5.3Q4 19 4 17.7V4.9Q4 3.6 5.3 3.6H19.4Q20.7 3.6 20.7 4.9V17.7Q20.7 19 19.4 19H14.2" fill="none" stroke="#eee" stroke-width="2"/><rect x="3.5" y="3.3" width="17.7" height="5.4" rx="1.3" fill="#eee"/><path d="M11.9 21V11.8M8 15.6L11.9 11.7L15.8 15.6" fill="none" stroke="#eee" stroke-width="2.1"/></svg>
<div style="position:absolute;left:431.89px;top:439px;white-space:nowrap;font:400 16.2px/16.2px 'Liberation Sans', sans-serif;color:#eeeeee;-webkit-text-stroke:0.3px #eeeeee;transform:scaleX(0.9818);transform-origin:0 0;">Open in New Tab</div>
<svg style="position:absolute;left:401px;top:476.6px;" width="24" height="24" viewBox="0 0 24 24"><path d="M1.8 18.2L9.3 10.3L13.6 14.8L20.6 7.6" fill="none" stroke="#eee" stroke-width="2.3"/><path d="M16 5.2H23.2V12.4Z" fill="#eee"/></svg>
<div style="position:absolute;left:431.81px;top:481px;white-space:nowrap;font:400 16.2px/16.2px 'Liberation Sans', sans-serif;color:#eeeeee;-webkit-text-stroke:0.3px #eeeeee;transform:scaleX(0.9807);transform-origin:0 0;">Show 4 Week Trend</div>
<div style="position:absolute;left:624.2px;top:481px;width:13.6px;height:13.2px;border:2.9px solid #eee;border-radius:3.5px"></div>
<div style="position:absolute;left:376px;top:510px;width:295px;height:1.4px;background:#777777;"></div>
<svg style="position:absolute;left:401.3px;top:521.2px;" width="24" height="24" viewBox="0 0 24 24"><circle cx="12" cy="12" r="9.6" fill="none" stroke="#eee" stroke-width="2"/><path d="M9 9.5A3 3 0 1 1 13.2 12.2C12.3 12.8 12 13.3 12 14.6" fill="none" stroke="#eee" stroke-width="2"/><rect x="11" y="16.2" width="2" height="2" fill="#eee"/></svg>
<div style="position:absolute;left:431.25px;top:525px;white-space:nowrap;font:400 16.2px/16.2px 'Liberation Sans', sans-serif;color:#eeeeee;-webkit-text-stroke:0.3px #eeeeee;transform:scaleX(1.0201);transform-origin:0 0;">Help</div>
<div style="position:absolute;left:671px;top:259.5px;width:769px;height:1.5px;background:#5f5f5f;"></div>
<div style="position:absolute;left:671px;top:285px;width:756px;height:1px;background:#606060;"></div>
<div style="position:absolute;left:671px;top:394px;width:756px;height:1.2px;background:#c8cfe0;"></div>
<div style="position:absolute;left:671px;top:514px;width:769px;height:1px;background:#6a6a6a;"></div>
<svg style="position:absolute;left:0;top:0" width="1445" height="765" viewBox="0 0 1445 765"><defs><filter id="sh" x="-20%" y="-20%" width="140%" height="140%"><feGaussianBlur in="SourceAlpha" stdDeviation="2.2"/><feOffset dx="2" dy="3" result="b"/><feComponentTransfer><feFuncA type="linear" slope="0.6"/></feComponentTransfer><feMerge><feMergeNode/><feMergeNode in="SourceGraphic"/></feMerge></filter></defs><g filter="url(#sh)"><path d="M585.41 38.55 L412.43 199.71 L420.68 208.43 L591.19 44.65Z" fill="#f44343"/><circle cx="588.30" cy="41.60" r="4.2" fill="#f44343"/><path d="M401.3 218.5L432.3 210.5L417.3 203.4L408.2 188.5Z" fill="#f44343"/></g><g filter="url(#sh)"><path d="M802.31 171.96 L611.21 254.05 L616.04 265.04 L805.69 179.64Z" fill="#f44343"/><circle cx="804.00" cy="175.80" r="4.2" fill="#f44343"/><path d="M594.4 268.0L615.4 243.6L614.5 259.1L627.3 270.5Z" fill="#f44343"/></g></svg>
</body></html>
